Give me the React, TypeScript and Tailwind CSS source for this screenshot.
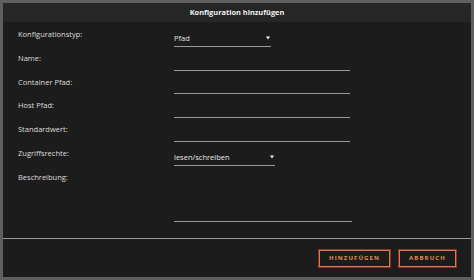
import React from "react";

const font = { fontFamily: '"Open Sans", "DejaVu Sans", sans-serif' };

function Arrow() {
  return (
    <svg width="4" height="4" viewBox="0 0 4 4" className="shrink-0">
      <path d="M0 0.5H4L2 3.5Z" fill="#f4f4f4" />
    </svg>
  );
}

function FormRow({
  label,
  children,
  tall,
}: {
  label: string;
  children: React.ReactNode;
  tall?: boolean;
}) {
  return (
    <div className={`flex ${tall ? "h-[56px]" : "h-[23.8px]"}`}>
      {/* LABEL */}
      <div className="w-[156px] shrink-0 pt-[7px] text-[7.5px] leading-[9px] font-medium text-[#dcdcdc]">
        {label}
      </div>
      {/* FIELD */}
      <div className="flex items-end">{children}</div>
    </div>
  );
}

function TextLine({ width }: { width: string }) {
  return <div className={`${width} h-[10px] border-b border-[#999999]`} />;
}

function SelectLine({ width, value }: { width: string; value: string }) {
  return (
    <div
      className={`${width} flex items-center justify-between border-b border-[#999999] pb-[3px] pr-[1px] text-[7.5px] leading-[9px] text-[#e6e6e6]`}
    >
      <span>{value}</span>
      <Arrow />
    </div>
  );
}

export default function App() {
  return (
    <div
      style={font}
      className="w-[474px] h-[280px] border-[3px] border-[#5f5f5f] bg-[#1c1c1c] flex flex-col"
    >
      {/* HEADER */}
      <div className="h-[19px] shrink-0 bg-[#262626] flex items-center justify-center text-[7.4px] font-bold text-[#f0f0f0]">
        Konfiguration hinzufügen
      </div>

      {/* BODY */}
      <div className="flex-1 pl-[15px] pt-[1px]">
        <FormRow label="Konfigurationstyp:">
          <SelectLine width="w-[97px]" value="Pfad" />
        </FormRow>
        <FormRow label="Name:">
          <TextLine width="w-[176px]" />
        </FormRow>
        <FormRow label="Container Pfad:">
          <TextLine width="w-[176px]" />
        </FormRow>
        <FormRow label="Host Pfad:">
          <TextLine width="w-[176px]" />
        </FormRow>
        <FormRow label="Standardwert:">
          <TextLine width="w-[176px]" />
        </FormRow>
        <FormRow label="Zugriffsrechte:">
          <SelectLine width="w-[101px]" value="lesen/schreiben" />
        </FormRow>
        <FormRow label="Beschreibung:" tall>
          <TextLine width="w-[178px]" />
        </FormRow>
      </div>

      {/* FOOTER */}
      <div className="h-[39px] shrink-0 border-t border-[#9a9a9a] flex items-center justify-end gap-[7px] pr-[14px] pt-[1px]">
        <button className="w-[73px] h-[19px] border border-[#9b2b22] shadow-[inset_0_0_0_1px_#c08458] text-[6px] font-bold tracking-[1.1px] text-[#e58e4e]">
          HINZUFÜGEN
        </button>
        <button className="w-[59px] h-[19px] border border-[#9b2b22] shadow-[inset_0_0_0_1px_#c08458] text-[6px] font-bold tracking-[1.1px] text-[#e58e4e]">
          ABBRUCH
        </button>
      </div>
    </div>
  );
}
